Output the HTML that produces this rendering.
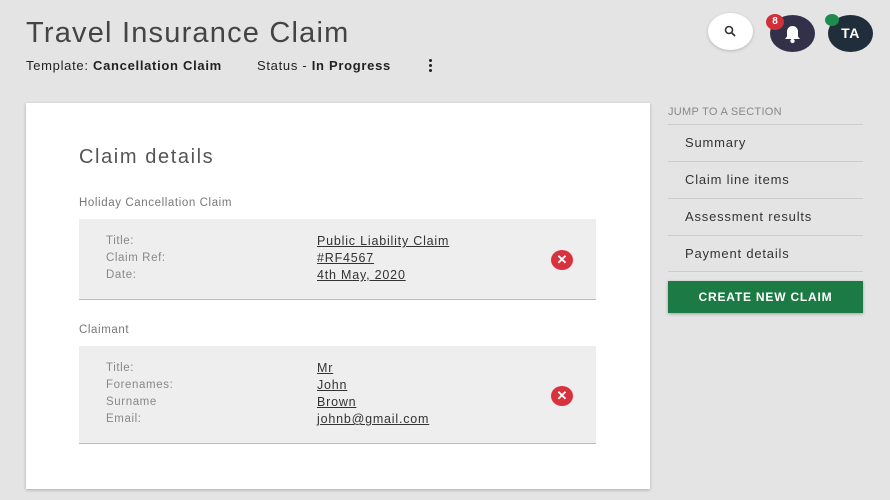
<!DOCTYPE html>
<html><head><style>
*{box-sizing:border-box;margin:0;padding:0}
body{width:890px;height:500px;background:#e4e4e4;font-family:"Liberation Sans",sans-serif;position:relative;overflow:hidden;color:#333;letter-spacing:0.6px}
.abs{position:absolute}
h1{position:absolute;left:26px;top:17px;font-size:29px;font-weight:300;color:#444;letter-spacing:1.2px}
.sub{position:absolute;top:58px;font-size:13px;color:#222;letter-spacing:0.7px}
.card{position:absolute;left:26px;top:103px;width:624px;height:386px;background:#fff;box-shadow:0 1px 3px rgba(0,0,0,.25)}
.box{position:absolute;left:79px;width:517px;background:#eeeeee;border-bottom:1px solid #bbb}
.lbl{position:absolute;left:27px;font-size:11.5px;color:#888}
.val{position:absolute;left:238px;font-size:12.5px;color:#333;text-decoration:underline;letter-spacing:0.8px}
.x{position:absolute;left:472px;width:22px;height:20px;border-radius:50%;background:#d9323f;color:#fff;font-weight:bold;font-size:13px;text-align:center;line-height:20px;letter-spacing:0}
.nav{position:absolute;left:668px;width:195px;height:37px;border-top:1px solid #ccc;font-size:13px;color:#333;padding-left:17px;line-height:36px;letter-spacing:0.8px}
</style></head><body>
<h1>Travel Insurance Claim</h1>
<div class="sub" style="left:26px">Template: <b>Cancellation Claim</b></div>
<div class="sub" style="left:257px">Status - <b>In Progress</b></div>
<div class="abs" style="left:429px;top:59px;width:3px;height:3px;background:#222;border-radius:50%;box-shadow:0 5px 0 #222,0 10px 0 #222"></div>
<div class="abs" style="left:708px;top:13px;width:45px;height:37px;border-radius:50%;background:#fff;box-shadow:0 1px 3px rgba(0,0,0,.2)">
<svg width="45" height="37"><circle cx="21" cy="17" r="3.5" fill="none" stroke="#333" stroke-width="1.6"/><line x1="23.5" y1="19.5" x2="27" y2="23" stroke="#333" stroke-width="1.8"/></svg></div>
<div class="abs" style="left:770px;top:15px;width:45px;height:37px;border-radius:50%;background:#33304a">
<svg width="45" height="37"><path d="M15 24 h15 l-2 -2.5 v-5 a5.5 5.5 0 0 0 -11 0 v5z" fill="#fff"/><circle cx="22.5" cy="26" r="2.2" fill="#fff"/></svg></div>
<div class="abs" style="left:766px;top:14px;width:18px;height:16px;border-radius:50%;background:#d0303a;color:#fff;font-size:10px;font-weight:bold;text-align:center;line-height:16px;letter-spacing:0">8</div>
<div class="abs" style="left:828px;top:15px;width:45px;height:37px;border-radius:50%;background:#1f2e3a;color:#fff;font-size:14px;font-weight:bold;text-align:center;line-height:37px">TA</div>
<div class="abs" style="left:825px;top:14px;width:14px;height:12px;border-radius:50%;background:#1e8a4c"></div>
<div class="card"></div>
<div class="abs" style="left:79px;top:146px;font-size:20px;font-weight:300;color:#555;letter-spacing:1.6px">Claim details</div>
<div class="abs" style="left:79px;top:197px;font-size:11.5px;color:#777">Holiday Cancellation Claim</div>
<div class="box" style="top:219px;height:81px">
<div class="lbl" style="top:16px">Title:</div><div class="lbl" style="top:33px">Claim Ref:</div><div class="lbl" style="top:50px">Date:</div>
<div class="val" style="top:15px">Public Liability Claim</div><div class="val" style="top:32px">#RF4567</div><div class="val" style="top:49px">4th May, 2020</div>
<div class="x" style="top:31px">✕</div></div>
<div class="abs" style="left:79px;top:324px;font-size:11.5px;color:#777">Claimant</div>
<div class="box" style="top:346px;height:98px">
<div class="lbl" style="top:16px">Title:</div><div class="lbl" style="top:33px">Forenames:</div><div class="lbl" style="top:50px">Surname</div><div class="lbl" style="top:67px">Email:</div>
<div class="val" style="top:15px">Mr</div><div class="val" style="top:32px">John</div><div class="val" style="top:49px">Brown</div><div class="val" style="top:66px">johnb@gmail.com</div>
<div class="x" style="top:40px">✕</div></div>
<div class="abs" style="left:668px;top:106px;font-size:11px;color:#888;letter-spacing:0.3px">JUMP TO A SECTION</div>
<div class="nav" style="top:124px">Summary</div>
<div class="nav" style="top:161px">Claim line items</div>
<div class="nav" style="top:198px">Assessment results</div>
<div class="nav" style="top:235px;border-bottom:1px solid #ccc">Payment details</div>
<div class="abs" style="left:668px;top:281px;width:195px;height:32px;background:#1c7a44;color:#fff;font-size:12px;font-weight:bold;text-align:center;line-height:32px;box-shadow:0 1px 3px rgba(0,0,0,.3);letter-spacing:0.8px">CREATE NEW CLAIM</div>
</body></html>
